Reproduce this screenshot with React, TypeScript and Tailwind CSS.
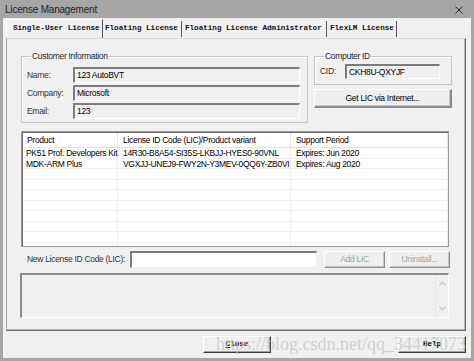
import React from "react";

const sans = "font-['Liberation_Sans',Arial,sans-serif] text-[8.5px] tracking-[-0.3px]";
const mono = "font-['Liberation_Mono','Courier_New',monospace] text-[7.6px] font-bold";

const rows = [
  {
    product: "PK51 Prof. Developers Kit",
    lic: "14R30-B8A54-SI35S-LKBJJ-HYES0-90VNL",
    period: "Expires: Jun 2020",
  },
  {
    product: "MDK-ARM Plus",
    lic: "VGXJJ-UNEJ9-FWY2N-Y3MEV-0QQ6Y-ZB0VI",
    period: "Expires: Aug 2020",
  },
];

const tabs = [
  { label: "Single-User License", w: "w-[97px] pl-[6px]", active: true },
  { label: "Floating License", w: "w-[79px] pl-[2px]" },
  { label: "Floating License Administrator", w: "w-[145px] pl-[3px]" },
  { label: "FlexLM License", w: "w-[70px] pl-[3px]" },
];

function ReadOnlyField({ value, className }: { value: string; className: string }) {
  return (
    <div
      className={`${className} flex items-center pl-[2px] border-t-2 border-l-2 border-t-[#7c7c7c] border-l-[#7c7c7c] border-b border-r border-b-white border-r-white bg-[#f0f0f0] text-black`}
    >
      {value}
    </div>
  );
}

function Button({ label, className, disabled }: { label: string; className: string; disabled?: boolean }) {
  return (
    <div
      className={`${className} flex items-center justify-center bg-[#efefef] border border-t-white border-l-white border-b-[#8a8a8a] border-r-[#8a8a8a] shadow-[inset_-1px_-1px_0_#c8c8c8] ${
        disabled ? "text-[#a3a3a3]" : "text-black"
      }`}
    >
      {label}
    </div>
  );
}

export default function App() {
  return (
    <div className="relative w-[474px] h-[361px] bg-[#a6a6a6] flex flex-col px-[3px] pb-[3px] overflow-hidden">
      {/* title bar */}
      <div className="h-[18px] flex items-center justify-between pl-[2px] pr-[8px]">
        <span className="font-['Liberation_Sans',Arial,sans-serif] text-[10px] tracking-[-0.2px] text-[#1e1e1e]">
          License Management
        </span>
        <svg width="8" height="8" viewBox="0 0 8 8" className="mt-[2px]">
          <path d="M0.5 0.5 L7.5 7.5 M7.5 0.5 L0.5 7.5" stroke="#2a2a2a" strokeWidth="1" />
        </svg>
      </div>

      <div className={`flex-1 bg-[#f0f0f0] flex flex-col ${sans}`}>
        {/* tab strip */}
        <div className="h-[20px] flex items-end pl-[3px]">
          {tabs.map((t) => (
            <div
              key={t.label}
              className={`${t.w} flex items-center border-r border-r-[#555] ${mono} tracking-normal text-[#111] ${
                t.active ? "h-[19px] border-l border-t border-l-white border-t-white" : "mb-[1px] h-[16px]"
              }`}
            >
              {t.label}
            </div>
          ))}
        </div>

        {/* tab panel */}
        <div className="ml-[3px] w-[460px] h-[293px] border border-l-[#a0a0a0] border-t-[#d8d8d8] border-r-[#6a6a6a] border-b-[#6a6a6a] shadow-[inset_-1px_-1px_0_#b4b4b4] pt-[12px] pl-[14px] flex flex-col">
          <div className="flex gap-[6px]">
            <fieldset className="w-[287px] h-[72px] border border-[#c6c6c6] shadow-[inset_1px_1px_0_white] pl-[5px] pr-[7px]">
              <legend className="ml-[4px] px-[1px] leading-[10px] text-[#222]">Customer Information</legend>
              <div className="mt-[6px] flex flex-col gap-[2px]">
                {[
                  ["Name:", "123 AutoBVT"],
                  ["Company:", "Microsoft"],
                  ["Email:", "123"],
                ].map(([l, v]) => (
                  <div key={l} className="flex items-center h-[16px]">
                    <span className="w-[46px] text-[#333]">{l}</span>
                    <ReadOnlyField value={v} className="w-[227px] h-[16px]" />
                  </div>
                ))}
              </div>
            </fieldset>

            <div className="w-[138px] flex flex-col">
              <fieldset className="h-[34px] border border-[#c6c6c6] shadow-[inset_1px_1px_0_white] pl-[5px]">
                <legend className="ml-[4px] px-[1px] leading-[10px] text-[#222]">Computer ID</legend>
                <div className="mt-[3px] flex items-center">
                  <span className="w-[25px] text-[#333]">CID:</span>
                  <ReadOnlyField value="CKH8U-QXYJF" className="w-[95px] h-[15px]" />
                </div>
              </fieldset>
              <Button label="Get LIC via Internet..." className="mt-[4px] w-[138px] h-[19px] border-b-2 border-r-2 border-b-[#7a7a7a] border-r-[#7a7a7a]" />
            </div>
          </div>

          {/* list view */}
          <div className="mt-[8px] w-[428px] h-[116px] bg-white border border-[#9a9a9a] shadow-[inset_1px_1px_0_#6e6e6e] pl-[1px] pt-[1px] overflow-hidden">
            <div className="flex h-[15px] border-b border-[#e3e3e3] text-black">
              <div className="w-[95px] pl-[4px] flex items-center border-r border-[#e3e3e3]">Product</div>
              <div className="w-[173px] pl-[5px] flex items-center border-r border-[#e3e3e3]">
                License ID Code (LIC)/Product variant
              </div>
              <div className="flex-1 pl-[5px] flex items-center border-r border-[#e3e3e3]">Support Period</div>
            </div>
            {Array.from({ length: 10 }).map((_, i) => {
              const r = rows[i];
              return (
                <div key={i} className="flex h-[10.5px] border-b border-[#f0f0f0] text-black leading-[10px]">
                  <div className="w-[95px] pl-[3px] border-r border-[#f0f0f0] whitespace-nowrap">{r?.product}</div>
                  <div className="w-[173px] pl-[5px] border-r border-[#f0f0f0] whitespace-nowrap">{r?.lic}</div>
                  <div className="flex-1 pl-[5px] border-r border-[#f0f0f0] whitespace-nowrap">{r?.period}</div>
                </div>
              );
            })}
          </div>

          {/* new LIC row */}
          <div className="mt-[4px] flex items-center h-[17px]">
            <span className="w-[109px] pl-[6px] text-[#333] whitespace-nowrap">New License ID Code (LIC):</span>
            <div className="w-[187px] h-[17px] bg-white border-t-2 border-l-2 border-t-[#7c7c7c] border-l-[#7c7c7c] border-b border-r border-b-[#f0f0f0] border-r-[#f0f0f0]" />
            <Button label="Add LIC" disabled className="ml-[7px] w-[61px] h-[17px]" />
            <Button label="Uninstall..." disabled className="ml-[4px] w-[61px] h-[17px]" />
          </div>

          {/* status box */}
          <div className="mt-[5px] -ml-[1px] w-[429px] h-[45px] flex justify-end border-t-2 border-l-2 border-t-[#8a8a8a] border-l-[#8a8a8a] border-b border-r border-b-white border-r-white">
            <div className="w-[13px] flex flex-col items-center justify-between py-[6px] border-l border-[#e8e8e8]">
              <svg width="7" height="5" viewBox="0 0 7 5">
                <path d="M0.5 4.5 L3.5 1 L6.5 4.5" fill="none" stroke="#a8a8a8" strokeWidth="1" />
              </svg>
              <svg width="7" height="5" viewBox="0 0 7 5">
                <path d="M0.5 0.5 L3.5 4 L6.5 0.5" fill="none" stroke="#a8a8a8" strokeWidth="1" />
              </svg>
            </div>
          </div>
        </div>

        {/* dialog buttons */}
        <div className="mt-[5px] flex">
          <div className={`ml-[200px] w-[68px] h-[17px] flex items-center justify-center bg-[#f0f0f0] border border-t-white border-l-white border-b-[#3c3c3c] border-r-[#3c3c3c] shadow-[inset_-1px_-1px_0_#a0a0a0] ${mono} tracking-normal text-black`}>
            <span>
              <span className="underline">C</span>lose
            </span>
          </div>
          <div className={`ml-auto mr-[5px] w-[68px] h-[17px] flex items-center justify-center bg-[#f0f0f0] border border-t-white border-l-white border-b-[#3c3c3c] border-r-[#3c3c3c] shadow-[inset_-1px_-1px_0_#a0a0a0] ${mono} tracking-normal text-black`}>
            Help
          </div>
        </div>
      </div>

      {/* watermark */}
      <div className="absolute left-[216px] top-[333px] font-['Liberation_Serif','Times_New_Roman',serif] text-[18px] leading-[22px] text-[#c4c4c4]/75 whitespace-nowrap pointer-events-none">
        https://blog.csdn.net/qq_34417073
      </div>
    </div>
  );
}
